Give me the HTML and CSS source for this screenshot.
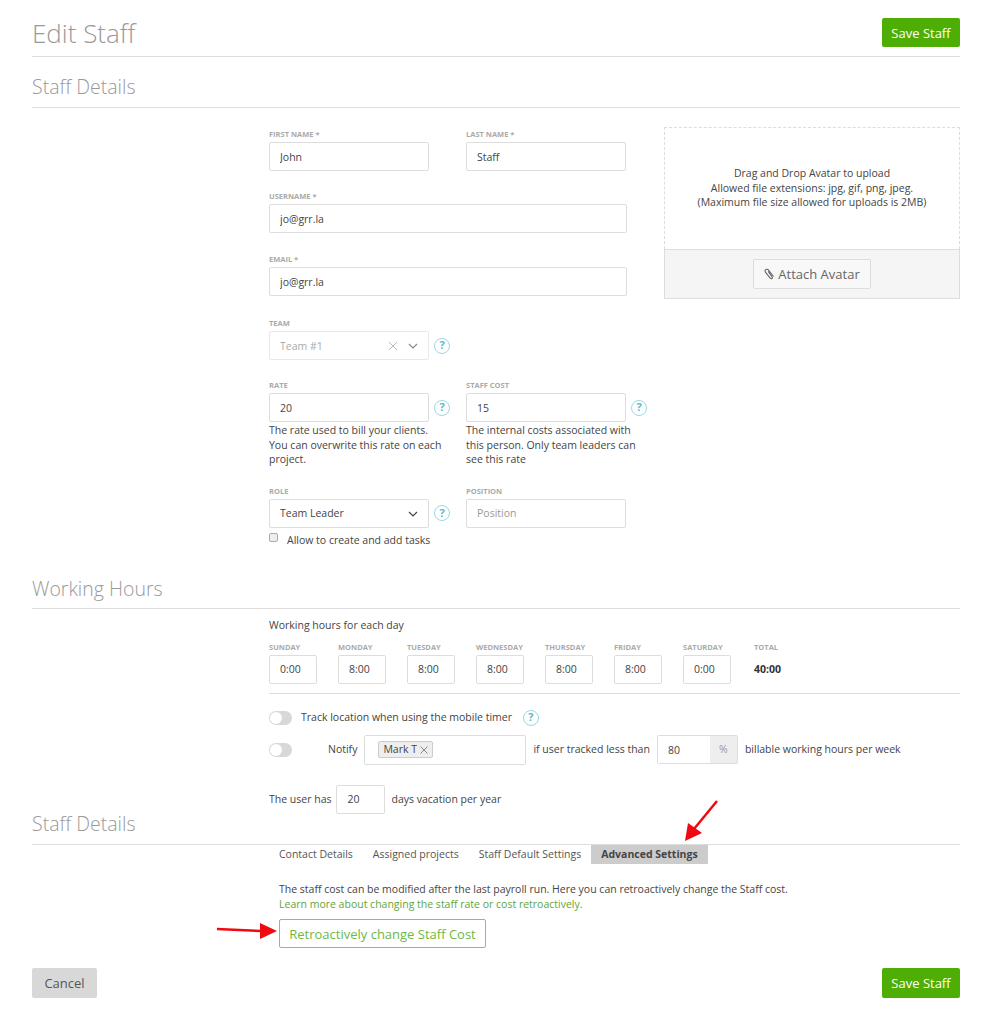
FILE: index.html

```html
<!DOCTYPE html>
<html lang="en">
<head>
    <meta charset="UTF-8">
    <meta name="viewport" content="width=device-width, initial-scale=1.0">
    <title>Edit Staff</title>
    <link rel="stylesheet" href="styles.css">
</head>
<body>
    <div class="page">
        <div class="page-header">
            <h1>Edit Staff</h1>
            <button type="button" class="btn-save">Save Staff</button>
        </div>

        <h2 class="section-title title-details">Staff Details</h2>
        <div class="details-row">
            <div class="details-form">
                <div class="field-row row-name">
                    <div class="field">
                        <label>First name *</label>
                        <input type="text" class="input w-160" value="John">
                    </div>
                    <div class="field">
                        <label>Last name *</label>
                        <input type="text" class="input w-160" value="Staff">
                    </div>
                </div>
                <div class="field row-username">
                    <label>Username *</label>
                    <input type="text" class="input w-358" value="jo@grr.la">
                </div>
                <div class="field row-email">
                    <label>Email *</label>
                    <input type="text" class="input w-358" value="jo@grr.la">
                </div>
                <div class="field row-team">
                    <label>Team</label>
                    <div class="with-help">
                        <div class="select select-disabled w-160">
                            <span>Team #1</span>
                            <svg class="select-x" width="10" height="10" viewBox="0 0 10 10"><path d="M1 1l8 8M9 1l-8 8" stroke="#bbb" fill="none"/></svg>
                            <svg class="select-caret" width="10" height="6" viewBox="0 0 10 6"><path d="M1 1l4 4 4-4" stroke="#888" stroke-width="1.2" fill="none"/></svg>
                        </div>
                        <span class="help">?</span>
                    </div>
                </div>
                <div class="field-row row-rate">
                    <div class="field">
                        <label>Rate</label>
                        <div class="with-help">
                            <input type="text" class="input w-160" value="20">
                            <span class="help">?</span>
                        </div>
                        <p class="hint">The rate used to bill your clients. You can overwrite this rate on each project.</p>
                    </div>
                    <div class="field">
                        <label>Staff cost</label>
                        <div class="with-help">
                            <input type="text" class="input w-160" value="15">
                            <span class="help">?</span>
                        </div>
                        <p class="hint">The internal costs associated with this person. Only team leaders can see this rate</p>
                    </div>
                </div>
                <div class="field-row row-role">
                    <div class="field">
                        <label>Role</label>
                        <div class="with-help">
                            <div class="select w-160">
                                <span>Team Leader</span>
                                <svg class="select-caret" width="10" height="6" viewBox="0 0 10 6"><path d="M1 1l4 4 4-4" stroke="#444" stroke-width="1.2" fill="none"/></svg>
                            </div>
                            <span class="help">?</span>
                        </div>
                    </div>
                    <div class="field">
                        <label>Position</label>
                        <input type="text" class="input w-160" placeholder="Position">
                    </div>
                </div>
                <div class="check-row">
                    <span class="check"></span>
                    <span>Allow to create and add tasks</span>
                </div>
            </div>

            <div class="avatar-box">
                <div class="avatar-drop">
                    Drag and Drop Avatar to upload<br>
                    Allowed file extensions: jpg, gif, png, jpeg.<br>
                    (Maximum file size allowed for uploads is 2MB)
                </div>
                <div class="avatar-foot">
                    <button type="button" class="btn-attach">
                        <svg width="11" height="12" viewBox="0 0 11 12"><path d="M9.5 8.5L4.5 2.2C3.7 1.2 2.5 1 1.7 1.7.9 2.4.9 3.5 1.6 4.4l4.6 5.8c.5.6 1.2.7 1.7.3.5-.4.5-1.1.1-1.7L4.2 3.5" stroke="#666" stroke-width="1.1" fill="none"/></svg>
                        Attach Avatar
                    </button>
                </div>
            </div>
        </div>

        <h2 class="section-title title-hours">Working Hours</h2>
        <div class="hours">
            <p class="hours-intro">Working hours for each day</p>
            <div class="days">
                <div class="day"><label>Sunday</label><input type="text" class="input day-input" value="0:00"></div>
                <div class="day"><label>Monday</label><input type="text" class="input day-input" value="8:00"></div>
                <div class="day"><label>Tuesday</label><input type="text" class="input day-input" value="8:00"></div>
                <div class="day"><label>Wednesday</label><input type="text" class="input day-input" value="8:00"></div>
                <div class="day"><label>Thursday</label><input type="text" class="input day-input" value="8:00"></div>
                <div class="day"><label>Friday</label><input type="text" class="input day-input" value="8:00"></div>
                <div class="day"><label>Saturday</label><input type="text" class="input day-input" value="0:00"></div>
                <div class="day day-total"><label>Total</label><strong>40:00</strong></div>
            </div>
            <div class="track-row">
                <span class="toggle"></span>
                <span>Track location when using the mobile timer</span>
                <span class="help">?</span>
            </div>
            <div class="notify-row">
                <span class="toggle"></span>
                <span class="notify-label">Notify</span>
                <div class="notify-input">
                    <span class="tag">Mark T <svg width="8" height="8" viewBox="0 0 8 8"><path d="M.5.5l7 7M7.5.5l-7 7" stroke="#888" fill="none"/></svg></span>
                </div>
                <span>if user tracked less than</span>
                <div class="percent">
                    <input type="text" class="percent-input" value="80">
                    <span class="percent-addon">%</span>
                </div>
                <span>billable working hours per week</span>
            </div>
            <div class="vacation-row">
                <span>The user has</span>
                <input type="text" class="input vacation-input" value="20">
                <span>days vacation per year</span>
            </div>
        </div>

        <h2 class="section-title title-tabs">Staff Details</h2>
        <div class="tabs-area">
            <div class="tabs">
                <span class="tab">Contact Details</span>
                <span class="tab">Assigned projects</span>
                <span class="tab">Staff Default Settings</span>
                <span class="tab tab-active">Advanced Settings</span>
            </div>
            <p class="tab-text">The staff cost can be modified after the last payroll run. Here you can retroactively change the Staff cost.</p>
            <a class="tab-link" href="#">Learn more about changing the staff rate or cost retroactively.</a>
            <button type="button" class="btn-outline">Retroactively change Staff Cost</button>
        </div>

        <div class="page-footer">
            <button type="button" class="btn-cancel">Cancel</button>
            <button type="button" class="btn-save btn-save-bottom">Save Staff</button>
        </div>
    </div>

    <!-- red annotation arrows drawn over the screenshot -->
    <svg class="arrows" width="1003" height="1024" viewBox="0 0 1003 1024">
        <path d="M717 801L694 829" stroke="#f00912" stroke-width="2.5" fill="none"/>
        <path d="M685 841L688 823 702 833Z" fill="#f00912"/>
        <path d="M217 929L262 931" stroke="#f00912" stroke-width="2.5" fill="none"/>
        <path d="M277 931L260 923 260 939Z" fill="#f00912"/>
    </svg>
</body>
</html>
```

FILE: styles.css

```css
* {
    box-sizing: border-box;
}
body {
    font-family: "Open Sans", Arial, sans-serif;
    font-size: 10.5px;
    line-height: 14.5px;
    color: #444;
    margin: 0;
    background-color: #fff;
}
.page {
    padding: 18px 43px 0 32px;
}
.page-header {
    display: flex;
    justify-content: space-between;
    align-items: flex-start;
    height: 39px;
    border-bottom: 1px solid #ddd;
}
h1 {
    margin: -3px 0 0;
    font-size: 26px;
    line-height: 36px;
    font-weight: 300;
    color: #999;
}
.btn-save {
    width: 78px;
    height: 29px;
    padding: 0;
    background-color: #4fae05;
    color: #fff;
    border: none;
    border-radius: 2px;
    font-family: inherit;
    font-size: 13px;
}
.section-title {
    margin: 0;
    font-size: 19.5px;
    line-height: 28px;
    font-weight: 300;
    color: #999;
    border-bottom: 1px solid #ddd;
}
.title-details {
    margin-top: 16px;
    height: 35px;
}
.title-hours {
    margin-top: 28px;
    height: 34px;
}
.title-tabs {
    line-height: 20px;
    height: 31px;
}
.details-row {
    display: flex;
    margin-top: 19px;
    padding-left: 237px;
}
.details-form {
    width: 395px;
}
.field-row {
    display: flex;
}
.field-row .field {
    width: 197px;
}
label {
    display: block;
    height: 15px;
    font-size: 7.5px;
    line-height: 15px;
    font-weight: 700;
    text-transform: uppercase;
    color: #aaa;
}
.input {
    display: block;
    height: 29px;
    padding: 0 10px;
    border: 1px solid #ddd;
    border-radius: 2px;
    background-color: #fff;
    font-family: inherit;
    font-size: 10.5px;
    color: #444;
    outline: none;
}
.input::placeholder {
    color: #999;
}
.w-160 {
    width: 160px;
}
.w-358 {
    width: 358px;
}
.row-username {
    margin-top: 18px;
}
.row-email {
    margin-top: 19px;
}
.row-team {
    margin-top: 20px;
}
.row-rate {
    margin-top: 18px;
}
.row-role {
    margin-top: 17px;
}
.with-help {
    display: flex;
    align-items: center;
    gap: 5px;
}
.help {
    display: inline-flex;
    align-items: center;
    justify-content: center;
    width: 16px;
    height: 16px;
    border: 1px solid #9bd8e4;
    border-radius: 50%;
    font-size: 11px;
    font-weight: 700;
    color: #5bb8cc;
}
.select {
    display: flex;
    align-items: center;
    height: 29px;
    padding: 1px 10px 0;
    border: 1px solid #ddd;
    border-radius: 2px;
    color: #444;
}
.select span {
    flex: 1;
}
.select-disabled {
    color: #aaa;
    border-color: #e8e8e8;
}
.select-x {
    margin-right: 10px;
}
.hint {
    width: 178px;
    margin: 1px 0 0;
    color: #444;
}
.check-row {
    display: flex;
    align-items: center;
    gap: 9px;
    margin-top: 5px;
}
.check {
    width: 9px;
    height: 9px;
    margin-top: -4px;
    border: 1px solid #aaa;
    border-radius: 2px;
    background-color: #eee;
}
.avatar-box {
    width: 296px;
    height: 172px;
    display: flex;
    flex-direction: column;
}
.avatar-drop {
    flex: 1;
    padding-top: 38px;
    text-align: center;
    border: 1px dashed #ddd;
    border-bottom: none;
}
.avatar-foot {
    display: flex;
    align-items: center;
    justify-content: center;
    height: 50px;
    background-color: #f5f5f5;
    border: 1px solid #ddd;
}
.btn-attach {
    display: flex;
    align-items: center;
    gap: 3px;
    height: 30px;
    padding: 0 10px;
    background-color: #f8f8f8;
    border: 1px solid #ddd;
    border-radius: 2px;
    font-family: inherit;
    font-size: 13px;
    color: #666;
}
.hours {
    padding-left: 237px;
}
.hours-intro {
    margin: 9px 0 0;
}
.days {
    display: flex;
    gap: 21px;
    height: 54px;
    margin-top: 7px;
    border-bottom: 1px solid #ddd;
}
.day {
    width: 48px;
}
.day-input {
    width: 48px;
}
.day-total {
    padding-left: 2px;
}
.day-total strong {
    display: block;
    margin-top: 7px;
    color: #333;
}
.track-row {
    display: flex;
    align-items: center;
    gap: 9px;
    margin-top: 16px;
    height: 16px;
}
.track-row .help {
    margin-left: 2px;
}
.toggle {
    width: 23px;
    height: 14px;
    border-radius: 7px;
    background-color: #d8d8d8;
    position: relative;
}
.toggle::after {
    content: "";
    position: absolute;
    left: 1px;
    top: 1px;
    width: 12px;
    height: 12px;
    border-radius: 50%;
    background-color: #fff;
}
.notify-row {
    display: flex;
    align-items: center;
    height: 30px;
    margin-top: 9px;
}
.notify-label {
    margin: 0 7px 0 36px;
}
.notify-input {
    display: flex;
    align-items: center;
    width: 162px;
    height: 30px;
    margin-right: 7px;
    padding-left: 13px;
    border: 1px solid #ddd;
    border-radius: 2px;
}
.tag {
    display: flex;
    align-items: center;
    gap: 3px;
    height: 17px;
    padding: 0 4px;
    background-color: #eee;
    border: 1px solid #ccc;
    border-radius: 2px;
}
.percent {
    display: flex;
    width: 81px;
    height: 29px;
    margin: 0 7px 0 7px;
    border: 1px solid #ddd;
    border-radius: 2px;
}
.percent-input {
    width: 52px;
    padding: 0 10px;
    border: none;
    font-family: inherit;
    font-size: 10.5px;
    color: #444;
    outline: none;
}
.percent-addon {
    flex: 1;
    display: flex;
    align-items: center;
    justify-content: center;
    background-color: #eee;
    color: #999;
}
.vacation-row {
    display: flex;
    align-items: center;
    gap: 5px;
    margin-top: 20px;
}
.vacation-input {
    width: 49px;
    margin-right: 1px;
}
.tabs-area {
    padding-left: 247px;
}
.tabs {
    display: flex;
    height: 19px;
}
.tab {
    padding: 2px 10px 0;
    line-height: 15px;
    color: #555;
}
.tab:first-child {
    padding-left: 0;
}
.tab-active {
    background-color: #ccc;
    font-weight: 700;
    color: #444;
}
.tab-text {
    margin: 18px 0 0;
    line-height: 15px;
}
.tab-link {
    display: block;
    color: #5fa53a;
    text-decoration: none;
}
.btn-outline {
    display: block;
    width: 207px;
    height: 29px;
    margin-top: 8px;
    padding: 0;
    background-color: #fff;
    border: 1px solid #85c860;
    border-radius: 2px;
    font-family: inherit;
    font-size: 13px;
    color: #6db845;
}
.page-footer {
    display: flex;
    justify-content: space-between;
    margin-top: 20px;
}
.btn-cancel {
    width: 65px;
    height: 30px;
    padding: 0;
    background-color: #d8d8d8;
    border: none;
    border-radius: 2px;
    font-family: inherit;
    font-size: 13px;
    color: #555;
}
.btn-save-bottom {
    height: 30px;
}
.arrows {
    position: absolute;
    left: 0;
    top: 0;
    pointer-events: none;
}
```
